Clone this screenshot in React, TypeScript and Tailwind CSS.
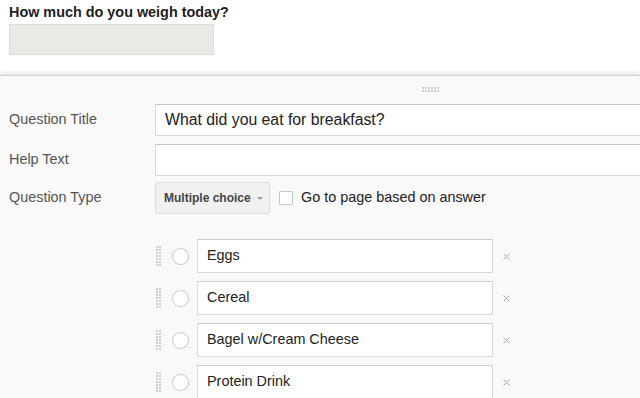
import React from 'react';

const options = ['Eggs', 'Cereal', 'Bagel w/Cream Cheese', 'Protein Drink'];

const DotGrid: React.FC<{ cols: number; rows: number }> = ({ cols, rows }) => (
  <div
    className="grid gap-[1px] self-start"
    style={{ gridTemplateColumns: `repeat(${cols}, 2px)` }}
  >
    {Array.from({ length: cols * rows }).map((_, i) => (
      <span key={i} className="block w-[2px] h-[2px] bg-[#cfcfcf]" />
    ))}
  </div>
);

const App: React.FC = () => {
  return (
    <div className="w-[640px] h-[398px] overflow-hidden bg-white text-[#222] font-['Liberation_Sans',Arial,sans-serif]">
      <div className="h-[75px] pt-[3px] px-[9px]">
        <h2 className="text-[14.4px] font-bold text-[#222] leading-[18px]">How much do you weigh today?</h2>
        <div className="mt-[3px] w-[205px] h-[31px] bg-[#eaeae4] border border-[#dedcd3]" />
      </div>

      <div className="bg-[#f9f9f9] border-t border-[#d3d3d3] shadow-[0_-3px_4px_rgba(0,0,0,0.09)] h-[323px]">
        <div className="h-[28px] flex items-start justify-center pt-[11px] pl-[220px]">
          <DotGrid cols={6} rows={2} />
        </div>

        <div className="flex flex-col gap-[8px]">
          <div className="flex items-center">
            <label className="w-[155px] pl-[9px] text-[14.4px] text-[#555]">Question Title</label>
            <div className="flex-1 -mr-[4px] h-[32px] bg-white border border-[#d9d9d9] border-t-[#c6c6c6] pl-[9px] flex items-center text-[15.8px] text-[#222]">
              What did you eat for breakfast?
            </div>
          </div>
          <div className="flex items-center">
            <label className="w-[155px] pl-[9px] text-[14.4px] text-[#555]">Help Text</label>
            <div className="flex-1 -mr-[4px] h-[32px] bg-white border border-[#d9d9d9] border-t-[#c6c6c6]" />
          </div>
          <div className="flex items-center -mt-[2px]">
            <label className="w-[155px] pl-[9px] text-[14.4px] text-[#555]">Question Type</label>
            <div className="w-[115px] h-[32px] bg-[#f1f1f1] border border-[#dcdcdc] rounded-[2px] flex items-center pl-[8px] gap-[6px] text-[12px] font-bold text-[#444]">
              Multiple choice
              <svg width="6" height="3" viewBox="0 0 6 3">
                <path d="M0 0h6L3 3z" fill="#999" />
              </svg>
            </div>
            <span className="ml-[9px] w-[14px] h-[14px] bg-white border border-[#c6c6c6] rounded-[1px]" />
            <span className="ml-[8px] text-[14.4px] text-[#222]">Go to page based on answer</span>
          </div>
        </div>

        <div className="mt-[25px] flex flex-col gap-[8px]">
          {options.map((o) => (
            <div key={o} className="flex items-center h-[34px]">
              <div className="ml-[156px] w-[8px] h-[20px] flex">
                <DotGrid cols={2} rows={7} />
              </div>
              <span className="ml-[8px] w-[17px] h-[17px] rounded-full border border-[#c6c6c6] bg-white" />
              <div className="ml-[8px] w-[296px] h-[34px] bg-white border border-[#d9d9d9] border-t-[#cccccc] pl-[9px] flex items-center text-[14.4px] text-[#222]">
                {o}
              </div>
              <svg className="ml-[10px]" width="7" height="7" viewBox="0 0 7 7">
                <path d="M0.5 0.5L6.5 6.5M6.5 0.5L0.5 6.5" stroke="#aaa" strokeWidth="1" />
              </svg>
            </div>
          ))}
        </div>
      </div>
    </div>
  );
};

export default App;
